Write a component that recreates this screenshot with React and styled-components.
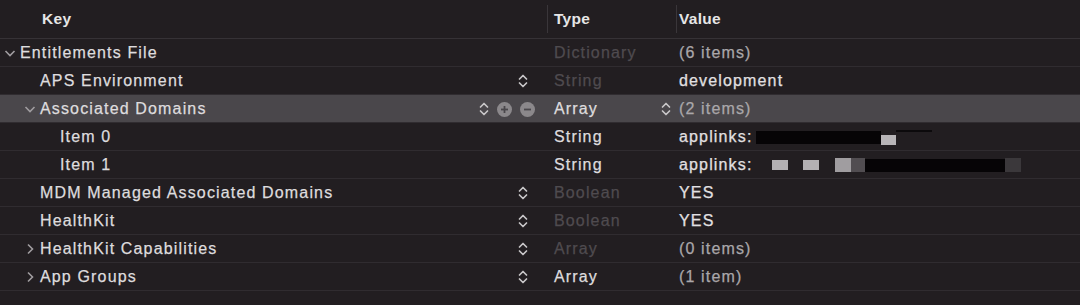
import styled, { createGlobalStyle } from "styled-components";

const Global = createGlobalStyle`
  html, body { margin: 0; padding: 0; background: #221e21; }
  body { font-family: "Liberation Sans", Arial, sans-serif; }
`;

const rows = [
  { key: "Entitlements File", depth: 0, open: true, type: "Dictionary", dimType: true, value: "(6 items)", dimValue: true },
  { key: "APS Environment", depth: 1, stepper: true, type: "String", dimType: true, value: "development" },
  { key: "Associated Domains", depth: 1, open: true, stepper: true, edit: true, selected: true, type: "Array", typeStepper: true, value: "(2 items)", dimValue: true },
  { key: "Item 0", depth: 2, type: "String", value: "applinks:", redact: "a" },
  { key: "Item 1", depth: 2, type: "String", value: "applinks:", redact: "b" },
  { key: "MDM Managed Associated Domains", depth: 1, stepper: true, type: "Boolean", dimType: true, value: "YES" },
  { key: "HealthKit", depth: 1, stepper: true, type: "Boolean", dimType: true, value: "YES" },
  { key: "HealthKit Capabilities", depth: 1, closed: true, stepper: true, type: "Array", dimType: true, value: "(0 items)", dimValue: true },
  { key: "App Groups", depth: 1, closed: true, stepper: true, type: "Array", value: "(1 item)", dimValue: true },
];

const Table = styled.div`
  width: 1080px;
  height: 305px;
  background: #221e21;
  overflow: hidden;
`;

const Header = styled.div`
  display: grid;
  grid-template-columns: 547px 129px 1fr;
  height: 38px;
  border-bottom: 1px solid #363236;
  color: #e6e6e6;
  font-weight: bold;
  font-size: 15.5px;
  letter-spacing: 0.3px;
`;

const HeadCell = styled.div`
  display: flex;
  align-items: center;
  padding-left: ${(p) => p.$pad}px;
  border-left: ${(p) => (p.$line ? "1px solid #3a363a" : "none")};
  margin: ${(p) => (p.$line ? "5px 0" : "0")};
`;

const Row = styled.div`
  display: grid;
  grid-template-columns: 547px 129px 1fr;
  height: 26px;
  padding-top: 1px;
  border-bottom: 1px solid #302c30;
  background: ${(p) => (p.$selected ? "#4a474b" : "transparent")};
  font-size: 16px;
  letter-spacing: 1.15px;
  -webkit-text-stroke: 0.25px currentColor;
  color: #dedcde;
`;

const KeyCell = styled.div`
  display: flex;
  align-items: center;
  padding-left: ${(p) => p.$depth * 20}px;
`;

const Chevron = styled.span`
  width: 20px;
  display: flex;
  justify-content: center;
  align-items: center;
`;

const KeyText = styled.span`
  flex: 1;
`;

const Controls = styled.span`
  display: flex;
  align-items: center;
  gap: 8px;
  padding-right: ${(p) => (p.$edit ? 12 : 19)}px;
`;

const TypeCell = styled.div`
  display: flex;
  align-items: center;
  padding-left: 7px;
  color: ${(p) => (p.$dim ? "#4f4b4f" : "#dedcde")};
`;

const TypeText = styled.span`
  flex: 1;
`;

const ValueCell = styled.div`
  display: flex;
  align-items: center;
  padding-left: 3px;
  color: ${(p) => (p.$dim ? "#aaa7aa" : "#e2e0e2")};
`;

const Block = styled.span`
  display: inline-block;
  width: ${(p) => p.$w}px;
  height: ${(p) => p.$h || 11}px;
  margin-left: ${(p) => p.$ml || 0}px;
  margin-top: ${(p) => p.$mt || 0}px;
  background: ${(p) => p.$c};
  filter: blur(0.6px);
`;

const Redaction = styled.span`
  display: flex;
  align-items: center;
`;

const Stepper = ({ style }) => (
  <svg width="10" height="16" viewBox="0 0 10 16" style={style}>
    <path d="M1.5 6 L5 2.5 L8.5 6 M1.5 10 L5 13.5 L8.5 10" fill="none" stroke="#c8c6c8" strokeWidth="1.7" strokeLinecap="round" strokeLinejoin="round" />
  </svg>
);

const RoundBtn = ({ minus }) => (
  <svg width="15" height="15" viewBox="0 0 15 15">
    <circle cx="7.5" cy="7.5" r="7.5" fill="#8b888b" />
    {!minus && <path d="M7.5 4 V11" stroke="#4a474b" strokeWidth="1.8" />}
    <path d="M4 7.5 H11" stroke="#4a474b" strokeWidth="1.8" />
  </svg>
);

const Disclosure = ({ open }) => (
  <svg width="12" height="12" viewBox="0 0 12 12">
    {open ? (
      <path d="M1.5 4 L6 8.5 L10.5 4" fill="none" stroke="#a09da0" strokeWidth="1.6" />
    ) : (
      <path d="M4 1.5 L8.5 6 L4 10.5" fill="none" stroke="#a09da0" strokeWidth="1.6" />
    )}
  </svg>
);

const RedactA = () => (
  <Redaction>
    <Block $w={125} $h={13} $ml={3} $c="#060406" />
    <Block $w={15} $h={10} $mt={6} $c="#b8b5b8" />
    <Block $w={36} $h={2} $mt={-12} $c="#0c0a0c" />
  </Redaction>
);

const RedactB = () => (
  <Redaction>
    <Block $w={16} $h={10} $ml={19} $c="#b3b0b3" />
    <Block $w={16} $h={10} $ml={15} $c="#b3b0b3" />
    <Block $w={16} $h={14} $ml={16} $c="#a09da0" />
    <Block $w={14} $h={14} $c="#514d51" />
    <Block $w={140} $h={13} $c="#060406" />
    <Block $w={16} $h={14} $c="#3b383b" />
  </Redaction>
);

const App = () => {
  return (
    <>
      <Global />
      <Table>
        <Header>
          <HeadCell $pad={42}>Key</HeadCell>
          <HeadCell $pad={6} $line>Type</HeadCell>
          <HeadCell $pad={2} $line>Value</HeadCell>
        </Header>
        {rows.map((r) => (
          <Row key={r.key} $selected={r.selected}>
            <KeyCell $depth={r.depth}>
              <Chevron>{(r.open || r.closed) && <Disclosure open={r.open} />}</Chevron>
              <KeyText>{r.key}</KeyText>
              <Controls $edit={r.edit}>
                {r.stepper && <Stepper />}
                {r.edit && <RoundBtn />}
                {r.edit && <RoundBtn minus />}
              </Controls>
            </KeyCell>
            <TypeCell $dim={r.dimType}>
              <TypeText>{r.type}</TypeText>
              {r.typeStepper && <Stepper style={{ marginRight: 5 }} />}
            </TypeCell>
            <ValueCell $dim={r.dimValue}>
              {r.value}
              {r.redact === "a" && <RedactA />}
              {r.redact === "b" && <RedactB />}
            </ValueCell>
          </Row>
        ))}
      </Table>
    </>
  );
};

export default App;
